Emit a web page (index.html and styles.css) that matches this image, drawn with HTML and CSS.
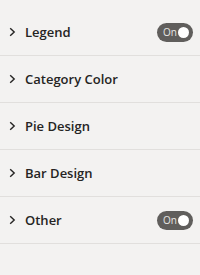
FILE: index.html
```
<!DOCTYPE html>
<html>
<head>
  <title>Format pane</title>
  <link rel="stylesheet" href="styles.css">
</head>
<body>
  <div class="pane">
    <div class="section">
      <svg class="chevron" width="7" height="10" viewBox="0 0 7 10"><path d="M1.2 1.2 L5.2 5 L1.2 8.8" fill="none" stroke="#252423" stroke-width="1.4"/></svg>
      <span class="title">Legend</span>
      <span class="toggle"><span class="toggle-label">On</span><span class="knob"></span></span>
    </div>
    <div class="section">
      <svg class="chevron" width="7" height="10" viewBox="0 0 7 10"><path d="M1.2 1.2 L5.2 5 L1.2 8.8" fill="none" stroke="#252423" stroke-width="1.4"/></svg>
      <span class="title">Category Color</span>
    </div>
    <div class="section">
      <svg class="chevron" width="7" height="10" viewBox="0 0 7 10"><path d="M1.2 1.2 L5.2 5 L1.2 8.8" fill="none" stroke="#252423" stroke-width="1.4"/></svg>
      <span class="title">Pie Design</span>
    </div>
    <div class="section">
      <svg class="chevron" width="7" height="10" viewBox="0 0 7 10"><path d="M1.2 1.2 L5.2 5 L1.2 8.8" fill="none" stroke="#252423" stroke-width="1.4"/></svg>
      <span class="title">Bar Design</span>
    </div>
    <div class="section">
      <svg class="chevron" width="7" height="10" viewBox="0 0 7 10"><path d="M1.2 1.2 L5.2 5 L1.2 8.8" fill="none" stroke="#252423" stroke-width="1.4"/></svg>
      <span class="title">Other</span>
      <span class="toggle"><span class="toggle-label">On</span><span class="knob"></span></span>
    </div>
  </div>
</body>
</html>
```
FILE: styles.css
```
body {
  margin: 0;
  background-color: #f3f2f1;
  font-family: "Open Sans", "Noto Sans", sans-serif;
  color: #252423;
}

.pane {
  padding-top: 9px;
}

.section {
  display: flex;
  align-items: center;
  height: 46px;
  padding: 0 7px 0 9px;
  border-bottom: 1px solid #e1dfdd;
}

.chevron {
  flex: none;
  margin-right: 9px;
  margin-top: -1px;
}

.title {
  flex: 1;
  font-size: 13px;
  font-weight: 600;
  margin-top: -1px;
}

.toggle {
  display: flex;
  align-items: center;
  justify-content: space-between;
  width: 36px;
  height: 19px;
  box-sizing: border-box;
  padding: 0 4px 0 6px;
  border-radius: 10px;
  background-color: #605e5c;
}

.toggle-label {
  color: #e8e6e4;
  font-size: 10px;
}

.knob {
  width: 11px;
  height: 11px;
  border-radius: 50%;
  background-color: #fff;
}
```
